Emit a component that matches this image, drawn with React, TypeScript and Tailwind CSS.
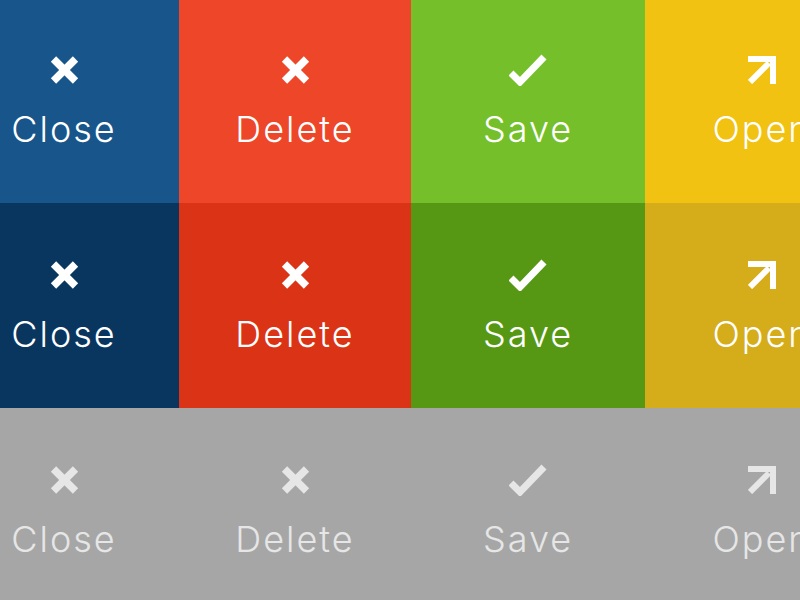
const CloseIcon = () => (
  <svg width="31" height="30" viewBox="0 0 31 30" fill="none" stroke="currentColor" strokeWidth="7.5">
    <line x1="4.5" y1="4" x2="26.5" y2="26" />
    <line x1="26.5" y1="4" x2="4.5" y2="26" />
  </svg>
);

const CheckIcon = () => (
  <svg width="38" height="32" viewBox="0 0 38 32" fill="none" stroke="currentColor" strokeWidth="7" strokeLinejoin="miter">
    <polyline points="2,19 11,28 35,3" />
  </svg>
);

const ArrowIcon = () => (
  <svg width="28" height="28" viewBox="0 0 28 28" fill="currentColor">
    <path d="M0 0H28V28H22V6H0Z" />
    <line x1="2" y1="26" x2="21" y2="7" stroke="currentColor" strokeWidth="6" />
  </svg>
);

const actions = [
  { label: "Close", icon: <CloseIcon />, w: "w-[230px]" },
  { label: "Delete", icon: <CloseIcon />, w: "w-[232px]" },
  { label: "Save", icon: <CheckIcon />, w: "w-[234px]" },
  { label: "Open", icon: <ArrowIcon />, w: "w-[234px]" },
];

const rows = [
  { h: "h-[203px]", pt: "pt-[55px]", text: "text-white", bg: ["bg-[#17558b]", "bg-[#ee4628]", "bg-[#75c02a]", "bg-[#f1c211]"] },
  { h: "h-[205px]", pt: "pt-[57px]", text: "text-white", bg: ["bg-[#08365f]", "bg-[#da3316]", "bg-[#569814]", "bg-[#d5ac1a]"] },
  { h: "h-[192px]", pt: "pt-[57px]", text: "text-[#e6e6e6]", bg: ["bg-[#a6a6a6]", "bg-[#a6a6a6]", "bg-[#a6a6a6]", "bg-[#a6a6a6]"] },
];

export default function App() {
  return (
    <div className="w-[800px] h-[600px] overflow-hidden font-['Inter',sans-serif]">
      {rows.map((row, r) => (
        <div key={r} className={`flex ml-[-51px] ${row.h}`}>
          {actions.map((a, i) => (
            <div key={a.label} className={`${a.w} ${row.bg[i]} ${row.text} ${row.pt} shrink-0 flex flex-col items-center`}>
              <div className="h-[30px] flex items-center justify-center">{a.icon}</div>
              <span className="mt-[26px] text-[36px] font-light leading-none tracking-[2px] whitespace-nowrap">{a.label}</span>
            </div>
          ))}
        </div>
      ))}
    </div>
  );
}
